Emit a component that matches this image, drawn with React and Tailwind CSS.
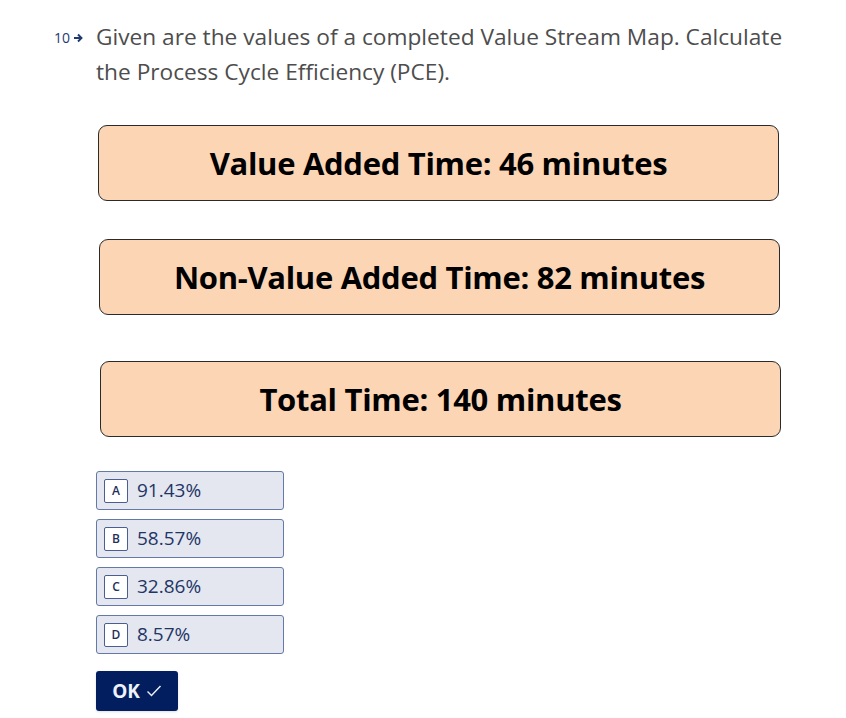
import React from 'react';

const boxes = [
  { label: 'Value Added Time: 46 minutes', cls: 'ml-[98px] mt-[36px]' },
  { label: 'Non-Value Added Time: 82 minutes', cls: 'ml-[99px] mt-[38px]' },
  { label: 'Total Time: 140 minutes', cls: 'ml-[100px] mt-[46px]' },
];

const options = [
  { key: 'A', text: '91.43%' },
  { key: 'B', text: '58.57%' },
  { key: 'C', text: '32.86%' },
  { key: 'D', text: '8.57%' },
];

export default function App() {
  return (
    <div className="w-[846px] h-[718px] bg-white overflow-hidden" style={{ fontFamily: '"Open Sans", "Noto Sans", sans-serif' }}>
      <div className="flex items-start pt-[22px]">
        {/* question number */}
        <div className="w-[96px] flex justify-end pr-[12px] pt-[9px]">
          <span className="text-[14px] text-[#1f3a70] flex items-center gap-[3px] leading-none">
            10
            <svg width="11" height="10" viewBox="0 0 11 10">
              <path d="M1 5h7M5 1.5L8.5 5 5 8.5" stroke="#1f3a70" strokeWidth="1.9" fill="none" />
            </svg>
          </span>
        </div>
        <p className="text-[22.7px] leading-[35px] text-[#4d4d4d] w-[700px] -mt-[3px]">
          Given are the values of a completed Value Stream Map. Calculate the Process Cycle Efficiency (PCE).
        </p>
      </div>

      {boxes.map((b) => (
        <div
          key={b.label}
          className={`${b.cls} w-[681px] h-[76px] rounded-[9px] border border-[#2b2b2b] bg-[#fcd5b5] flex items-center justify-center`}
        >
          <span className="text-[31px] font-bold text-black tracking-[-0.3px]">{b.label}</span>
        </div>
      ))}

      <div className="ml-[96px] mt-[34px] flex flex-col gap-[9px]">
        {options.map((o) => (
          <div
            key={o.key}
            className="w-[188px] h-[39px] rounded-[3px] border border-[#6579a8] bg-[#e4e7ef] flex items-center pl-[7px] gap-[9px]"
          >
            <span className="w-[24px] h-[24px] bg-white border border-[#4a5f8f] rounded-[2px] flex items-center justify-center text-[12px] font-semibold text-[#1f2f5a]">
              {o.key}
            </span>
            <span className="text-[19px] text-[#1f3566]">{o.text}</span>
          </div>
        ))}
      </div>

      <button className="ml-[96px] mt-[17px] w-[82px] h-[40px] rounded-[3px] bg-[#021e5f] text-[#eef2fb] flex items-center justify-center gap-[6px] shadow-sm">
        <span className="text-[19px] font-bold">OK</span>
        <svg width="16" height="14" viewBox="0 0 16 14">
          <path d="M1.5 7.5l4 4L14.5 2" stroke="#eef2fb" strokeWidth="1.4" fill="none" />
        </svg>
      </button>
    </div>
  );
}
